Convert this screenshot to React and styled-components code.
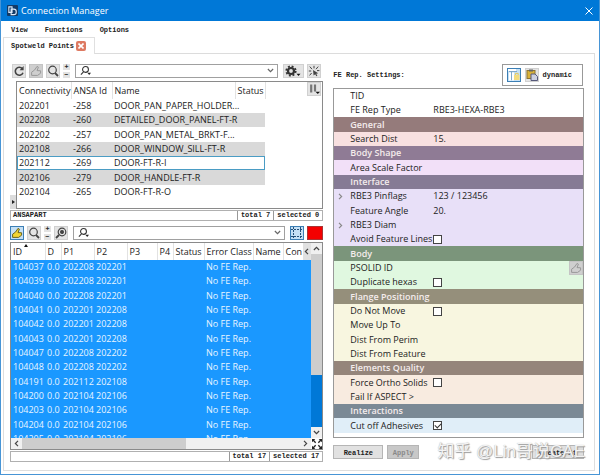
import React from 'react';
import { useState } from 'react';
import styled, { createGlobalStyle, css } from 'styled-components';

const connections = [
  ['202201', '-258', 'DOOR_PAN_PAPER_HOLDER...'],
  ['202208', '-260', 'DETAILED_DOOR_PANEL-FT-R'],
  ['202202', '-257', 'DOOR_PAN_METAL_BRKT-F...'],
  ['202108', '-266', 'DOOR_WINDOW_SILL-FT-R'],
  ['202112', '-269', 'DOOR-FT-R-I'],
  ['202106', '-279', 'DOOR_HANDLE-FT-R'],
  ['202104', '-265', 'DOOR-FT-R-O'],
];

const points = [
  ['104037', '202208', '202201'],
  ['104039', '202208', '202201'],
  ['104040', '202208', '202201'],
  ['104041', '202201', '202208'],
  ['104042', '202201', '202208'],
  ['104043', '202201', '202208'],
  ['104047', '202208', '202202'],
  ['104048', '202208', '202202'],
  ['104191', '202112', '202108'],
  ['104200', '202104', '202106'],
  ['104203', '202104', '202106'],
  ['104204', '202104', '202106'],
  ['104205', '202104', '202106'],
];

const settings = [
  { label: 'TID', bg: '#ffffff' },
  { label: 'FE Rep Type', value: 'RBE3-HEXA-RBE3', bg: '#ffffff' },
  { label: 'General', head: true, bg: '#957b7b' },
  { label: 'Search Dist', value: '15.', bg: '#f8e0e0' },
  { label: 'Body Shape', head: true, bg: '#8f7b95' },
  { label: 'Area Scale Factor', bg: '#f2e0f8' },
  { label: 'Interface', head: true, bg: '#867b95' },
  { label: 'RBE3 Pinflags', value: '123 / 123456', expand: true, bg: '#e8e0f8' },
  { label: 'Feature Angle', value: '20.', bg: '#e8e0f8' },
  { label: 'RBE3 Diam', expand: true, bg: '#e8e0f8' },
  { label: 'Avoid Feature Lines', check: true, bg: '#e8e0f8' },
  { label: 'Body', head: true, bg: '#7b957b' },
  { label: 'PSOLID ID', pick: true, bg: '#e0f8e0' },
  { label: 'Duplicate hexas', check: true, bg: '#e0f8e0' },
  { label: 'Flange Positioning', head: true, bg: '#958f7b' },
  { label: 'Do Not Move', check: true, bg: '#f8f6e0' },
  { label: 'Move Up To', bg: '#f8f6e0' },
  { label: 'Dist From Perim', bg: '#f8f6e0' },
  { label: 'Dist From Feature', bg: '#f8f6e0' },
  { label: 'Elements Quality', head: true, bg: '#95857b' },
  { label: 'Force Ortho Solids', check: true, bg: '#f8ebe0' },
  { label: 'Fail If ASPECT >', bg: '#f8ebe0' },
  { label: 'Interactions', head: true, bg: '#7b8995' },
  { label: 'Cut off Adhesives', check: true, on: true, bg: '#e0eef8' },
];

const Svg = ({ size = 12, color = '#444', children }) => (
  <svg width={size} height={size} viewBox="0 0 12 12" fill="none" stroke={color} strokeWidth="1.2" aria-hidden="true">
    {children}
  </svg>
);

const LogoIcon = () => (
  <Svg size={11}>
    <rect width="12" height="12" rx="1" fill="#123a66" stroke="none" />
    <path d="M2 2h3.5v6H2zM4.5 4.5h3c3.5 0 3.5 6 0 6h-3z" stroke="#dbe9f8" strokeWidth="1.2" />
  </Svg>
);

const ReloadIcon = () => (
  <Svg>
    <path d="M9.3 3.6A4 4 0 1 0 10 7.8" strokeWidth="1.6" />
    <path d="M10.6 1v4.2H6.6z" fill="#444" stroke="none" />
  </Svg>
);

const HandIcon = ({ fill = 'none', color = '#999' }) => (
  <Svg>
    <path d="M7 1.4 4.6 5 1.6 7.2v3.2h6l3-2.2V5.8L7 5.6l1.4-3.4z" fill={fill} stroke={color} strokeWidth="1" strokeLinejoin="round" />
  </Svg>
);

const ZoomIcon = ({ target }) => (
  <Svg>
    <circle cx={target ? 7 : 5.5} cy="5" r="3.8" />
    {target ? (
      <>
        <circle cx="7" cy="5" r="1.4" fill="#444" />
        <path d="M4 8 1 11" strokeWidth="1.8" />
      </>
    ) : (
      <path d="m8 8 3 3" strokeWidth="1.8" />
    )}
  </Svg>
);

const SearchIcon = () => (
  <Svg size={11}>
    <circle cx="6" cy="4.8" r="3.2" stroke="#333" />
    <path d="M3.8 7.4 1 10.4" stroke="#333" />
    <path d="M8 8.5h4l-2 2.3z" fill="#222" stroke="none" />
  </Svg>
);

const GearIcon = () => (
  <svg width="17" height="12" viewBox="0 0 17 12" fill="none" aria-hidden="true">
    <circle cx="6" cy="6" r="3" stroke="#333" strokeWidth="2.2" />
    <circle cx="6" cy="6" r="4.7" stroke="#333" strokeWidth="1.8" strokeDasharray="1.9 1.8" />
    <path d="M11.5 8.8h4l-2 2.2z" fill="#111" />
  </svg>
);

const FlashIcon = () => (
  <Svg>
    <path d="M6 .8v2.6M1.8 1.6l2.2 2.6M10.2 1.6 8 4.2M.8 6h2.4M9 5.6h2.4M3.6 8l-2 2.4" strokeWidth="1" />
    <path d="m5 5 5.2 3.2-2 .5 1.2 2-1 .5-1.2-2-1.6 1.4z" fill="#444" stroke="none" />
  </Svg>
);

const ColumnsIcon = () => (
  <Svg>
    <path d="M3.2 1.5v8M7 1.5v7" stroke="#777" strokeWidth="2.2" />
    <path d="M7.5 8.8H12L9.8 11z" fill="#111" stroke="none" />
  </Svg>
);

const BoxSelectIcon = () => (
  <Svg>
    <path d="M2.5 0v12M9.5 0v12M0 2.5h12M0 9.5h12" stroke="#234f78" strokeWidth="1" strokeDasharray="2 1" />
  </Svg>
);

const ChevronIcon = ({ dir, color }) => {
  const paths = { down: 'M2.5 4 6 7.5 9.5 4', up: 'M2.5 8 6 4.5 9.5 8', left: 'M8 2.5 4.5 6 8 9.5', right: 'M4 2.5 7.5 6 4 9.5' };
  return (
    <Svg size={9} color={color}>
      <path d={paths[dir]} strokeWidth="1.6" />
    </Svg>
  );
};

const ExpandIcon = () => (
  <Svg size={10}>
    <path d="M0 0h4L0 4zM12 0v4L8 0zM0 12V8l4 4zM12 12H8l4-4z" fill="#222" stroke="none" />
    <path d="m1 1 3.4 3.4M11 1 7.6 4.4M1 11l3.4-3.4M11 11 7.6 7.6" stroke="#222" strokeWidth="1.6" />
  </Svg>
);

const LockTableIcon = () => (
  <Svg>
    <path d="M0 1h8M2 3.5v8M5 3.5v8" stroke="#fff" strokeWidth="2" />
    <path d="M1 2.5h8M3.5 3v8" stroke="#7fa9cc" strokeWidth="1" />
    <rect x="6" y="6" width="5.5" height="5" fill="#f3dc7c" stroke="none" />
    <path d="M7.4 6V4.4h2.8V6" stroke="#e5c95c" strokeWidth="1" />
  </Svg>
);

const PasteIcon = () => (
  <Svg>
    <rect x="1" y="1.5" width="8" height="8" fill="#d9b23a" stroke="#8c7434" strokeWidth="1" />
    <rect x="3" y=".5" width="4" height="2" fill="#666" stroke="none" />
    <path d="M5 5h4l2.5 2.5v4H5z" fill="#ccd0e0" stroke="#56597a" strokeWidth="1" />
  </Svg>
);

const Combo = ({ label }) => (
  <ComboBox>
    <SearchIcon />
    <ComboInput aria-label={label} />
    <PlainButton aria-label="Open list"><ChevronIcon dir="down" color="#666" /></PlainButton>
  </ComboBox>
);

const Setting = ({ item }) => {
  const [on, setOn] = useState(!!item.on);
  const id = item.label.toLowerCase().replace(/\W+/g, '-');

  if (item.head) {
    return <SettingRow $bg={item.bg} $head><span />{item.label}</SettingRow>;
  }

  return (
    <SettingRow $bg={item.bg}>
      <Arrow>{item.expand && <ChevronIcon dir="right" color="#888" />}</Arrow>
      {item.check ? <label htmlFor={id}>{item.label}</label> : <span>{item.label}</span>}
      <span>
        {item.check ? <Check id={id} type="checkbox" checked={on} onChange={() => setOn(!on)} /> : item.value}
      </span>
      {item.pick && <ToolButton $flat aria-label="Pick property"><HandIcon /></ToolButton>}
    </SettingRow>
  );
};

const App = () => {
  return (
    <Window>
      <GlobalStyle />
      <TitleBar>
        <LogoIcon />
        <Title>Connection Manager</Title>
        <CloseButton aria-label="Close">
          <svg width="8" height="8" viewBox="0 0 8 8" stroke="#fff"><path d="m.5.5 7 7m0-7-7 7" /></svg>
        </CloseButton>
      </TitleBar>
      <Menu>
        <MenuItem>View</MenuItem>
        <MenuItem>Functions</MenuItem>
        <MenuItem>Options</MenuItem>
      </Menu>
      <Tabs>
        <Tab>
          Spotweld Points
          <TabClose aria-label="Close tab">
            <svg width="6" height="6" viewBox="0 0 6 6" stroke="#fff" strokeWidth="1.6"><path d="m.5.5 5 5m0-5-5 5" /></svg>
          </TabClose>
        </Tab>
        <TabFill />
      </Tabs>
      <Pane>
        <Column>
          <Toolbar $indent>
            <ToolButton aria-label="Reload"><ReloadIcon /></ToolButton>
            <ToolButton $flat aria-label="Pick"><HandIcon /></ToolButton>
            <ToolButton aria-label="Zoom"><ZoomIcon /></ToolButton>
            <Steps>
              <Step aria-label="More">+</Step>
              <Step aria-label="Less">−</Step>
            </Steps>
            <Combo label="Search connections" />
            <ToolButton $wide aria-label="Options"><GearIcon /></ToolButton>
            <ToolButton aria-label="Flash"><FlashIcon /></ToolButton>
          </Toolbar>
          <Upper>
            <SideHandle aria-label="Expand panel">
              <svg width="3" height="4" viewBox="0 0 3 4"><path d="M0 0l3 2-3 2z" fill="#222" /></svg>
            </SideHandle>
            <UpperFrame>
              <Table>
                <colgroup>
                  <Col $w={54} /><Col $w={41} /><Col $w={123} /><Col $w={30} />
                </colgroup>
                <thead>
                  <tr>
                    <th>Connectivity</th><th>ANSA Id</th><th>Name</th><th>Status</th>
                  </tr>
                </thead>
                <tbody>
                  {connections.map(([id, ansa, name], i) => (
                    <ConnectionRow key={id} $current={id === '202112'} $odd={i % 2 === 1}>
                      <td>{id}</td><td>{ansa}</td><td>{name}</td><td />
                    </ConnectionRow>
                  ))}
                </tbody>
              </Table>
              <ToolButton aria-label="Columns"><ColumnsIcon /></ToolButton>
            </UpperFrame>
          </Upper>
          <StatusBar>
            <StatusName>ANSAPART</StatusName>
            <StatusCell>total 7</StatusCell>
            <StatusCell>selected 0</StatusCell>
          </StatusBar>
          <Toolbar>
            <ToolButton $active aria-label="Pick points"><HandIcon fill="#f2d534" color="#6a6420" /></ToolButton>
            <ToolButton aria-label="Zoom"><ZoomIcon /></ToolButton>
            <Steps>
              <Step aria-label="More">+</Step>
              <Step aria-label="Less">−</Step>
            </Steps>
            <ToolButton aria-label="Zoom to selection"><ZoomIcon target /></ToolButton>
            <Combo label="Search points" />
            <ToolButton $active aria-label="Box select"><BoxSelectIcon /></ToolButton>
            <ColorButton aria-label="Highlight color" />
          </Toolbar>
          <Lower>
            <ListArea>
              <Table $full>
                <colgroup>
                  <Col $w={34} /><Col $w={16} /><Col $w={33} /><Col $w={33} /><Col $w={30} />
                  <Col $w={16} /><Col $w={31} /><Col $w={49} /><Col $w={30} /><col />
                </colgroup>
                <thead>
                  <tr>
                    <Sorted>
                      ID
                      <SortMark />
                    </Sorted>
                    <th>D</th><th>P1</th><th>P2</th><th>P3</th><th>P4</th>
                    <th>Status</th><th>Error Class</th><th>Name</th>
                    <LastHead>
                      <span>Con</span>
                      <HeadButton aria-label="Previous columns"><ChevronIcon dir="left" /></HeadButton>
                    </LastHead>
                  </tr>
                </thead>
                <tbody>
                  {points.map(([id, p1, p2]) => (
                    <PointRow key={id}>
                      <td>{id}</td><td>0.0</td><td>{p1}</td><td>{p2}</td><td /><td /><td />
                      <td>No FE Rep.</td><td /><td />
                    </PointRow>
                  ))}
                </tbody>
              </Table>
            </ListArea>
            <VScroll>
              <PlainButton aria-label="Scroll up"><ChevronIcon dir="up" /></PlainButton>
              <Track><Thumb /></Track>
              <PlainButton aria-label="Scroll down"><ChevronIcon dir="down" /></PlainButton>
            </VScroll>
            <HScroll>
              <PlainButton aria-label="Scroll left"><ChevronIcon dir="left" /></PlainButton>
              <HTrack><HThumb /></HTrack>
              <PlainButton aria-label="Scroll right"><ChevronIcon dir="right" /></PlainButton>
            </HScroll>
            <PlainButton aria-label="Fit columns"><ExpandIcon /></PlainButton>
          </Lower>
          <StatusBar>
            <StatusName />
            <StatusCell>total 17</StatusCell>
            <StatusCell>selected 17</StatusCell>
          </StatusBar>
        </Column>
        <Column>
          <SettingsHead>
            FE Rep. Settings:
            <ModeBox>
              <ToolButton $active aria-label="Lock"><LockTableIcon /></ToolButton>
              <ToolButton aria-label="Paste"><PasteIcon /></ToolButton>
              dynamic
            </ModeBox>
          </SettingsHead>
          <SettingsList>
            {settings.map((item) => <Setting key={item.label} item={item} />)}
          </SettingsList>
          <Actions>
            <ActionButton $w={50}>Realize</ActionButton>
            <ActionButton $w={32} disabled>Apply</ActionButton>
            <ActionButton $w={52} $last>Create At</ActionButton>
          </Actions>
        </Column>
      </Pane>
      <Watermark>知乎 @Lin哥说CAE</Watermark>
    </Window>
  );
};

const mono = css`
  font-family: "Liberation Mono", monospace;
  font-size: 7px;
  font-weight: bold;
`;

const GlobalStyle = createGlobalStyle`
  * {
    box-sizing: border-box;
  }

  body {
    margin: 0;
    font-family: "Open Sans", "Noto Sans", sans-serif;
    font-size: 9px;
    line-height: 14px;
    color: #222;
  }

  button, input {
    margin: 0;
    padding: 0;
    border: none;
    background: none;
    font: inherit;
    color: inherit;
  }

  svg {
    display: block;
    flex: none;
  }
`;

const Window = styled.main`
  position: relative;
  display: flex;
  flex-direction: column;
  height: 100vh;
  overflow: hidden;
  padding-bottom: 3px;
  border: 1px solid #4795d6;
  border-top: none;
  background: #fff;
`;

const TitleBar = styled.header`
  display: flex;
  align-items: center;
  gap: 3px;
  height: 21px;
  flex: none;
  padding: 0 6px;
  background: #0078d7;
  color: #fff;
`;

const Title = styled.h1`
  flex: 1;
  margin: 0;
  font-size: 9px;
  font-weight: normal;
`;

const CloseButton = styled.button`
  display: flex;
`;

const Menu = styled.nav`
  display: flex;
  gap: 17px;
  height: 16px;
  flex: none;
  padding-left: 10px;
  ${mono}
`;

const MenuItem = styled.button`
  height: 17px;
`;

const Tabs = styled.div`
  display: flex;
  height: 17px;
  flex: none;
  margin: 0 4px 0 2px;
`;

const Tab = styled.div`
  display: flex;
  align-items: center;
  gap: 2px;
  width: 92px;
  padding-left: 7px;
  border: 1px solid #e0e0e0;
  border-bottom: none;
  ${mono}
`;

const TabFill = styled.div`
  flex: 1;
  border-bottom: 1px solid #dcdcdc;
`;

const TabClose = styled.button`
  display: flex;
  align-items: center;
  justify-content: center;
  width: 10px;
  height: 10px;
  border-radius: 2px;
  background: #de7a62;
`;

const Pane = styled.div`
  flex: 1;
  min-height: 0;
  display: grid;
  grid-template-columns: 5fr 4fr;
  column-gap: 10px;
  margin: 0 4px 0 2px;
  padding: 9px 10px 8px 6px;
  border: 1px solid #dedede;
  border-top: none;
`;

const Column = styled.section`
  display: flex;
  flex-direction: column;
  min-width: 0;
  min-height: 0;
`;

const Toolbar = styled.div`
  display: flex;
  align-items: center;
  gap: 3px;
  height: 15px;
  flex: none;
  padding: ${(p) => (p.$indent ? '0 2px' : '0')};
`;

const ToolButton = styled.button`
  display: flex;
  align-items: center;
  justify-content: center;
  width: ${(p) => (p.$wide ? '21px' : '14px')};
  height: 14px;
  flex: none;
  border: 1px solid ${(p) => (p.$active ? '#3c7fb5' : p.$flat ? '#c4c4c4' : '#d0d0d0')};
  background: ${(p) => (p.$active ? '#c5e0f5' : p.$flat ? '#cfcfcf' : '#e4e4e4')};
`;

const ColorButton = styled(ToolButton)`
  width: 16px;
  border-color: #a33;
  background: #f40000;
`;

const Steps = styled.div`
  display: flex;
  flex-direction: column;
  gap: 2px;
`;

const Step = styled.button`
  width: 7px;
  height: 6px;
  background: #e2e2e2;
  font-size: 7px;
  font-weight: bold;
  line-height: 6px;
`;

const ComboBox = styled.div`
  display: flex;
  align-items: center;
  flex: 1;
  min-width: 0;
  height: 14px;
  margin: 0 2px;
  padding: 0 1px 0 4px;
  border: 1px solid #a0a0a0;
`;

const ComboInput = styled.input`
  flex: 1;
  min-width: 0;
  outline: none;
`;

const PlainButton = styled.button`
  display: flex;
  align-items: center;
  justify-content: center;
  min-width: 11px;
  min-height: 11px;
`;

const Upper = styled.div`
  display: flex;
  align-items: flex-end;
  flex: none;
  margin-top: 3px;
`;

const SideHandle = styled.button`
  display: flex;
  align-items: center;
  justify-content: center;
  width: 6px;
  height: 14px;
  flex: none;
  background: #dcdcdc;
`;

const UpperFrame = styled.div`
  display: flex;
  align-items: flex-start;
  justify-content: space-between;
  flex: 1;
  min-width: 0;
  padding: 0 1px 9px 0;
  border: 1px solid #8a8a8a;
`;

const Table = styled.table`
  table-layout: fixed;
  width: ${(p) => (p.$full ? '100%' : '248px')};
  border-collapse: collapse;

  th, td {
    padding: 0 0 0 2px;
    text-align: left;
    font-weight: normal;
    white-space: nowrap;
  }

  th {
    height: 17px;
    border-right: 1px solid #e2e2e2;
  }

  tbody tr {
    height: 14px;
  }

  tbody tr:nth-child(3n) {
    height: 15px;
  }
`;

const Col = styled.col`
  width: ${(p) => p.$w}px;
`;

const ConnectionRow = styled.tr`
  background: ${(p) => (p.$odd ? '#d9d9d9' : '#fff')};
  ${(p) => p.$current && 'outline: 1px solid #4a9cc4; outline-offset: -1px;'}
`;

const PointRow = styled.tr`
  background: #1a98ff;
  color: #e8f5ff;
`;

const Sorted = styled.th`
  position: relative;
`;

const SortMark = styled.span`
  position: absolute;
  top: 1px;
  left: 13px;
  border: 2px solid transparent;
  border-top: none;
  border-bottom: 3px solid #111;
`;

const LastHead = styled.th`
  position: relative;
  overflow: hidden;
`;

const HeadButton = styled(PlainButton)`
  position: absolute;
  top: 0;
  right: 0;
  min-width: 7px;
  width: 7px;
  height: 17px;
  background: #e0e0e0;
`;

const StatusBar = styled.div`
  display: flex;
  height: 11px;
  flex: none;
  margin-top: 1px;
  border: 1px solid #b0b0b0;
  line-height: 9px;
  ${mono}

  & + ${Toolbar} {
    margin: 4px 0 2px;
  }
`;

const StatusName = styled.span`
  flex: 1;
  padding-left: 2px;
`;

const StatusCell = styled.span`
  padding: 0 3px;
  border-left: 1px solid #999;
`;

const Lower = styled.div`
  display: grid;
  grid-template-columns: 1fr 11px;
  grid-template-rows: 1fr 11px;
  flex: 1;
  min-height: 0;
  border: 1px solid #8a8a8a;
`;

const ListArea = styled.div`
  min-width: 0;
  min-height: 0;
  overflow: hidden;
`;

const VScroll = styled.div`
  display: flex;
  flex-direction: column;
  min-height: 0;
  background: #f0f0f0;
`;

const Track = styled.div`
  display: flex;
  flex-direction: column;
  justify-content: flex-end;
  flex: 1;
  background: #cdcdcd;
`;

const Thumb = styled.div`
  height: 30%;
  background: #0078d7;
`;

const HScroll = styled.div`
  display: flex;
  background: #f0f0f0;
`;

const HTrack = styled.div`
  flex: 1;
`;

const HThumb = styled.div`
  width: 59%;
  height: 100%;
  background: #cdcdcd;
`;

const SettingsHead = styled.div`
  display: flex;
  align-items: center;
  justify-content: space-between;
  height: 25px;
  flex: none;
  padding: 1px 1px 2px 0;
  ${mono}
`;

const ModeBox = styled.div`
  display: flex;
  align-items: center;
  gap: 4px;
  height: 22px;
  padding: 0 10px 0 4px;
  border: 1px solid #999;
`;

const SettingsList = styled.div`
  flex: none;
  padding-bottom: 4px;
  border: 1px solid #999;
`;

const SettingRow = styled.div`
  display: grid;
  grid-template-columns: ${(p) => (p.$head ? '16px 1fr' : '16px 83px 1fr auto')};
  align-items: center;
  height: 14px;
  background: ${(p) => p.$bg};
  white-space: nowrap;
  ${(p) => p.$head && 'color: #f4ecec; font-weight: 600;'}

  &:nth-child(3n) {
    height: 15px;
  }
`;

const Arrow = styled.span`
  padding-left: 2px;
`;

const Check = styled.input`
  appearance: none;
  display: block;
  width: 9px;
  height: 9px;
  border: 1px solid #444;
  background: #fff;

  &:checked::after {
    content: "";
    display: block;
    width: 5px;
    height: 3px;
    margin: 1px;
    border: solid #333;
    border-width: 0 0 1px 1px;
    transform: rotate(-45deg);
  }
`;

const Actions = styled.div`
  display: flex;
  gap: 4px;
  flex: none;
  margin-top: 7px;
`;

const ActionButton = styled.button`
  width: ${(p) => p.$w}px;
  height: 14px;
  border: 1px solid #b5b5b5;
  background: #e1e1e1;
  ${mono}
  ${(p) => p.$last && 'margin-left: auto;'}

  &:disabled {
    background: #c8c8c8;
    color: #888;
  }
`;

const Watermark = styled.div`
  position: absolute;
  right: 14px;
  bottom: 11px;
  font-family: "Liberation Sans", "Noto Sans CJK SC", sans-serif;
  font-size: 17px;
  line-height: 22px;
  color: #f4f4f4;
  text-shadow: 1px 1px 1px #999, 0 0 1px #aaa;
  white-space: nowrap;
  pointer-events: none;
`;

export default App;
